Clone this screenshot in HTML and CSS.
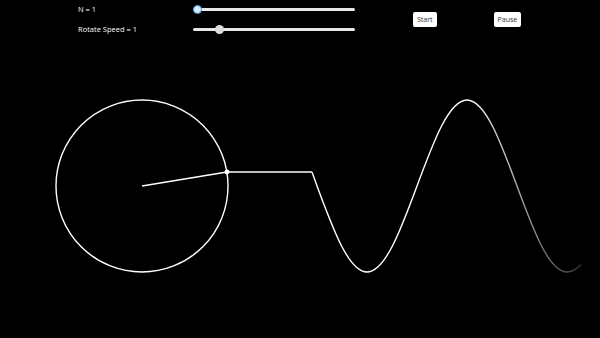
FILE: index.html
```html
<!DOCTYPE html>
<html lang="en">

<head>
  <meta charset="UTF-8">
  <meta name="viewport" content="width=device-width, initial-scale=1.0">
  <title>Fourier Series</title>
  <link rel="stylesheet" href="styles.css">
</head>

<body>
  <header class="controls">
    <div class="sliders">
      <div class="row">
        <label for="n" class="label">N = 1</label>
        <input type="range" id="n" class="slider focused" min="1" max="20" value="1">
      </div>
      <div class="row">
        <label for="speed" class="label">Rotate Speed = 1</label>
        <input type="range" id="speed" class="slider" min="0" max="7" value="1">
      </div>
    </div>
    <button class="btn start">Start</button>
    <button class="btn pause">Pause</button>
  </header>

  <svg class="stage" width="600" height="300" viewBox="0 38 600 300">
    <defs>
      <linearGradient id="fade" gradientUnits="userSpaceOnUse" x1="470" y1="0" x2="585" y2="0">
        <stop offset="0" stop-color="#ffffff" />
        <stop offset="1" stop-color="#2a2a2a" />
      </linearGradient>
    </defs>
    <!-- rotating circle -->
    <circle cx="142" cy="186" r="86" fill="none" stroke="#fff" stroke-width="1.4" />
    <line x1="142" y1="186" x2="227" y2="172" stroke="#fff" stroke-width="1.4" />
    <circle cx="227" cy="172" r="2.4" fill="#fff" />
    <!-- link to the wave -->
    <line x1="227" y1="172" x2="312" y2="172" stroke="#fff" stroke-width="1.4" />
    <!-- wave -->
    <path d="M312 172 L317 186
             C333.31 230.06 348.9 272 367 272
             C385.1 272 400.69 230.06 417 186
             C433.31 141.94 448.9 100 467 100
             C485.1 100 500.69 141.94 517 186
             C533.31 230.06 548.9 272 567 272
             Q574 272 581 264.5"
      fill="none" stroke="url(#fade)" stroke-width="1.4" />
  </svg>
</body>

</html>
```

FILE: styles.css
```css
* {
  padding: 0;
  margin: 0;
  box-sizing: border-box;
}

body {
  font-family: "Open Sans", "Noto Sans", sans-serif;
  width: 600px;
  height: 338px;
  overflow: hidden;
  background-color: #000;
  color: white;
}

.controls {
  display: flex;
  align-items: center;
  height: 38px;
  padding-left: 78px;
}

.sliders {
  display: flex;
  flex-direction: column;
  gap: 2px;
}

.row {
  display: flex;
  align-items: center;
  height: 18px;
}

.label {
  width: 115px;
  font-size: 7.5px;
}

.slider {
  -webkit-appearance: none;
  appearance: none;
  width: 162px;
  height: 9px;
  background: transparent;
  outline: none;
}

.slider::-webkit-slider-runnable-track {
  height: 3px;
  background-color: #e8e8e8;
  border-radius: 2px;
}

.slider::-webkit-slider-thumb {
  -webkit-appearance: none;
  width: 9px;
  height: 9px;
  margin-top: -3px;
  border-radius: 50%;
  background-color: #dcdcdc;
  border: none;
}

.focused::-webkit-slider-thumb {
  background-color: #d6ecfa;
  border: 1.5px solid #3a9ad9;
}

.btn {
  height: 15px;
  padding: 0 4px;
  font-family: "Open Sans", "Noto Sans", sans-serif;
  font-size: 7px;
  color: #333;
  background-color: #fff;
  border: none;
  border-radius: 2px;
}

.start {
  margin-left: 58px;
}

.pause {
  margin-left: 57px;
}

.stage {
  display: block;
}
```
